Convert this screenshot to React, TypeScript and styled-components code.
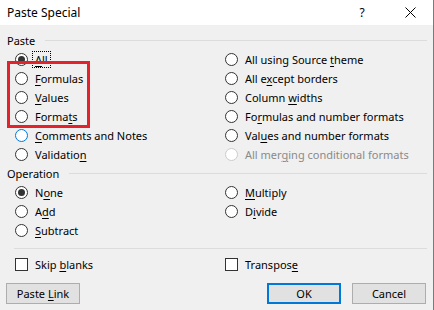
import React from "react";
import styled, { createGlobalStyle, css } from "styled-components";

const Global = createGlobalStyle`
  html, body { margin: 0; padding: 0; background: #f0f0f0; }
  body { font-family: "Noto Sans", "Open Sans", sans-serif; font-size: 11px; color: #000; }
  * { box-sizing: border-box; }
`;

const Dialog = styled.div`
  position: relative;
  width: 434px;
  height: 310px;
  border-right: 1px solid #7a7a7a;
  background: #f0f0f0;
  display: flex;
  flex-direction: column;
  overflow: hidden;
`;

const TitleBar = styled.div`
  height: 25px;
  background: #fff;
  display: flex;
  align-items: center;
  padding-left: 7px;
`;

const Title = styled.div`
  flex: 1;
  font-size: 12px;
  line-height: 16px;
`;

const TitleButton = styled.div<{ $w: number }>`
  width: ${(p) => p.$w}px;
  height: 25px;
  display: flex;
  align-items: center;
  justify-content: center;
  font-size: 12px;
`;

const Body = styled.div`
  flex: 1;
  display: flex;
  flex-direction: column;
  padding: 7px 6px 0 7px;
`;

const GroupHeader = styled.div<{ $mt?: number }>`
  display: flex;
  align-items: center;
  gap: 10px;
  height: 16px;
  margin-top: ${(p) => p.$mt ?? 0}px;
  &::after {
    content: "";
    flex: 1;
    height: 1px;
    background: #dcdcdc;
  }
`;

const OptionGrid = styled.div<{ $rows: number; $mt: number }>`
  display: grid;
  grid-template-columns: 210px 1fr;
  grid-template-rows: repeat(${(p) => p.$rows}, 19px);
  grid-auto-flow: column;
  padding-left: 8px;
  margin-top: ${(p) => p.$mt}px;
`;

const Option = styled.div<{ $disabled?: boolean }>`
  display: flex;
  align-items: center;
  gap: 7px;
  color: ${(p) => (p.$disabled ? "#8a8a8a" : "#000")};
`;

const Radio = styled.span<{ $checked?: boolean; $hover?: boolean; $disabled?: boolean }>`
  width: 13px;
  height: 13px;
  flex: none;
  border-radius: 50%;
  background: #fff;
  border: 1px solid
    ${(p) => (p.$disabled ? "#cccccc" : p.$hover ? "#0078d7" : "#333333")};
  display: flex;
  align-items: center;
  justify-content: center;
  ${(p) =>
    p.$checked &&
    css`
      &::after {
        content: "";
        width: 7px;
        height: 7px;
        border-radius: 50%;
        background: #333;
      }
    `}
`;

const Checkbox = styled.span`
  width: 13px;
  height: 13px;
  flex: none;
  background: #fff;
  border: 1px solid #333;
`;

const Label = styled.span<{ $focused?: boolean }>`
  line-height: 15px;
  white-space: pre;
  ${(p) =>
    p.$focused &&
    css`
      outline: 1px dotted #000;
      padding: 0 2px;
      margin: 0 -2px;
    `}
`;

const Key = styled.span`
  text-decoration: underline;
  text-underline-offset: 2px;
  text-decoration-thickness: 1px;
`;

const Separator = styled.div`
  height: 1px;
  background: #dcdcdc;
  margin: 8px 0 0 7px;
`;

const ButtonRow = styled.div`
  display: flex;
  gap: 11px;
  margin: 9px 1px 0 -1px;
`;

const Spacer = styled.div`
  flex: 1;
`;

const Button = styled.div<{ $default?: boolean }>`
  width: 74px;
  height: 21px;
  display: flex;
  align-items: center;
  justify-content: center;
  background: #e1e1e1;
  border: ${(p) => (p.$default ? "2px solid #0078d7" : "1px solid #adadad")};
`;

const Highlight = styled.div`
  position: absolute;
  left: 7px;
  top: 61px;
  width: 83px;
  height: 67px;
  border: 3px solid #e3232b;
  pointer-events: none;
`;

type Opt = {
  text: string;
  key: number;
  checked?: boolean;
  hover?: boolean;
  disabled?: boolean;
  focused?: boolean;
};

const withKey = (text: string, key: number) => (
  <>
    {text.slice(0, key)}
    <Key>{text[key]}</Key>
    {text.slice(key + 1)}
  </>
);

const RadioOption = ({ o }: { o: Opt }) => (
  <Option $disabled={o.disabled}>
    <Radio $checked={o.checked} $hover={o.hover} $disabled={o.disabled} />
    <Label $focused={o.focused}>{withKey(o.text, o.key)}</Label>
  </Option>
);

const paste: Opt[] = [
  { text: "All", key: 0, checked: true, focused: true },
  { text: "Formulas", key: 0 },
  { text: "Values", key: 0 },
  { text: "Formats", key: 5 },
  { text: "Comments and Notes", key: 0, hover: true },
  { text: "Validation", key: 9 },
  { text: "All using Source theme", key: 17 },
  { text: "All except borders", key: 5 },
  { text: "Column widths", key: 7 },
  { text: "Formulas and number formats", key: 2 },
  { text: "Values and number formats", key: 3 },
  { text: "All merging conditional formats", key: 7, disabled: true },
];

const operation: Opt[] = [
  { text: "None", key: 1, checked: true },
  { text: "Add", key: 1 },
  { text: "Subtract", key: 0 },
  { text: "Multiply", key: 0 },
  { text: "Divide", key: 1 },
];

export default function App() {
  return (
    <>
      <Global />
      <Dialog>
        <TitleBar>
          <Title>Paste Special</Title>
          <TitleButton $w={50}>?</TitleButton>
          <TitleButton $w={46}>
            <svg width="11" height="11" viewBox="0 0 11 11">
              <path d="M0.5 0.5 L10.5 10.5 M10.5 0.5 L0.5 10.5" stroke="#000" strokeWidth="1" />
            </svg>
          </TitleButton>
        </TitleBar>
        <Body>
          <GroupHeader>Paste</GroupHeader>
          <OptionGrid $rows={6} $mt={2}>
            {paste.map((o) => (
              <RadioOption key={o.text} o={o} />
            ))}
          </OptionGrid>
          <GroupHeader $mt={1}>Operation</GroupHeader>
          <OptionGrid $rows={3} $mt={2}>
            {operation.map((o) => (
              <RadioOption key={o.text} o={o} />
            ))}
          </OptionGrid>
          <Separator />
          <OptionGrid $rows={1} $mt={6}>
            <Option>
              <Checkbox />
              <Label>{withKey("Skip blanks", 5)}</Label>
            </Option>
            <Option>
              <Checkbox />
              <Label>{withKey("Transpose", 8)}</Label>
            </Option>
          </OptionGrid>
          <ButtonRow>
            <Button>
              <Label>{withKey("Paste Link", 6)}</Label>
            </Button>
            <Spacer />
            <Button $default>
              <Label>OK</Label>
            </Button>
            <Button>
              <Label>Cancel</Label>
            </Button>
          </ButtonRow>
        </Body>
        <Highlight />
      </Dialog>
    </>
  );
}
